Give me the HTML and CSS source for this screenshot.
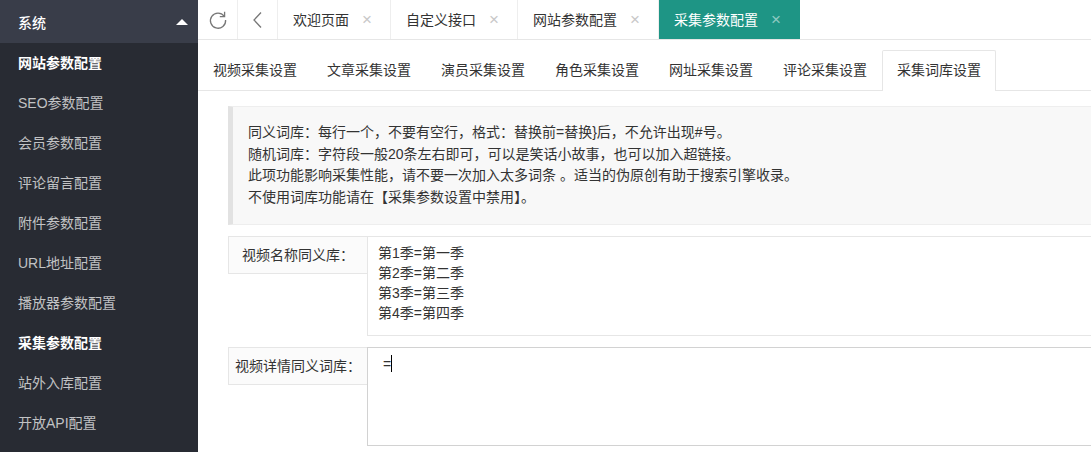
FILE: index.html
```html
<!DOCTYPE html>
<html lang="zh-CN">
<head>
<meta charset="utf-8">
<title>采集参数配置</title>
<link rel="stylesheet" href="styles.css">
</head>
<body>
<div class="app">
  <aside class="side">
    <div class="side-head"><span>系统</span><i class="tri"></i></div>
    <ul class="menu">
      <li class="on">网站参数配置</li>
      <li>SEO参数配置</li>
      <li>会员参数配置</li>
      <li>评论留言配置</li>
      <li>附件参数配置</li>
      <li>URL地址配置</li>
      <li>播放器参数配置</li>
      <li class="on">采集参数配置</li>
      <li>站外入库配置</li>
      <li>开放API配置</li>
    </ul>
  </aside>
  <main class="main">
    <div class="topbar">
      <div class="tool">
        <svg width="20" height="20" viewBox="0 0 20 20"><path d="M16.2 6.2A7.6 7.6 0 1 0 17.6 10" fill="none" stroke="#777" stroke-width="1.3"/><path d="M16.6 1.8V6.6H11.8" fill="none" stroke="#777" stroke-width="1.3"/></svg>
      </div>
      <div class="tool">
        <svg width="12" height="18" viewBox="0 0 12 18"><path d="M9 1.5L2 9l7 7.5" fill="none" stroke="#777" stroke-width="1.3"/></svg>
      </div>
      <div class="ptab">欢迎页面<span class="x">×</span></div>
      <div class="ptab">自定义接口<span class="x">×</span></div>
      <div class="ptab">网站参数配置<span class="x">×</span></div>
      <div class="ptab active">采集参数配置<span class="x">×</span></div>
    </div>
    <div class="subtabs">
      <div class="stab">视频采集设置</div>
      <div class="stab">文章采集设置</div>
      <div class="stab">演员采集设置</div>
      <div class="stab">角色采集设置</div>
      <div class="stab">网址采集设置</div>
      <div class="stab">评论采集设置</div>
      <div class="stab active">采集词库设置</div>
    </div>
    <div class="content">
      <div class="quote">
        <p>同义词库：每行一个，不要有空行，格式：替换前=替换}后，不允许出现#号。</p>
        <p>随机词库：字符段一般20条左右即可，可以是笑话小故事，也可以加入超链接。</p>
        <p>此项功能影响采集性能，请不要一次加入太多词条 。适当的伪原创有助于搜索引擎收录。</p>
        <p>不使用词库功能请在【采集参数设置中禁用】。</p>
      </div>
      <div class="form-item">
        <label class="label">视频名称同义库：</label>
        <div class="textarea">第1季=第一季<br>第2季=第二季<br>第3季=第三季<br>第4季=第四季</div>
      </div>
      <div class="form-item">
        <label class="label">视频详情同义词库：</label>
        <div class="textarea focus"><span class="eq">=</span><span class="caret"></span></div>
      </div>
    </div>
  </main>
</div>
</body>
</html>
```
FILE: styles.css
```css
* { box-sizing: border-box; margin: 0; padding: 0; }
html, body { width: 100%; height: 100%; overflow: hidden; }
body {
  font-family: "Liberation Sans", "Noto Sans CJK SC", sans-serif;
  font-size: 14px;
  color: #333;
  background: #fff;
}
ul { list-style: none; }
.app { display: flex; height: 452px; }

.side { width: 198px; flex: none; background: #282b33; }
.side-head {
  height: 43px;
  background: #393d49;
  color: #fff;
  display: flex;
  align-items: center;
  justify-content: space-between;
  padding: 0 10px 0 18px;
}
.side-head span { font-weight: 500; }
.tri {
  width: 0; height: 0;
  border-left: 6px solid transparent;
  border-right: 6px solid transparent;
  border-bottom: 6px solid #fff;
}
.menu li {
  height: 40px;
  line-height: 40px;
  padding-left: 18px;
  color: rgba(255,255,255,0.72);
}
.menu li.on { color: #fff; font-weight: bold; }

.main { flex: 1; min-width: 0; overflow: hidden; }

.topbar {
  height: 40px;
  display: flex;
  border-bottom: 1px solid #e6e6e6;
}
.tool {
  width: 40px;
  height: 39px;
  border-right: 1px solid #eee;
  display: flex;
  align-items: center;
  justify-content: center;
}
.ptab {
  height: 39px;
  line-height: 39px;
  padding: 0 17px 0 15px;
  border-right: 1px solid #eee;
  color: #333;
  white-space: nowrap;
}
.ptab .x {
  display: inline-block;
  width: 12px;
  margin-left: 12px;
  color: #c8c8c8;
  font-size: 17px;
  text-align: center;
}
.ptab.active { background: #1e9585; color: #fff; border-right-color: #1e9585; }
.ptab.active .x { color: rgba(255,255,255,0.5); }

.subtabs {
  margin-top: 10px;
  height: 41px;
  display: flex;
  border-bottom: 1px solid #e6e6e6;
}
.stab {
  height: 40px;
  line-height: 40px;
  padding: 0 15px;
  white-space: nowrap;
  color: #333;
}
.stab.active {
  padding: 0 14px;
  border: 1px solid #e6e6e6;
  border-bottom: none;
  border-radius: 2px 2px 0 0;
  background: #fff;
  height: 41px;
  line-height: 39px;
}

.content { padding: 15px 0 0 30px; width: 1100px; }
.quote {
  background: #f8f8f8;
  border: 1px solid #eee;
  border-left: 5px solid #e2e2e2;
  padding: 15px 15px 16px;
  line-height: 21.5px;
  color: #333;
}
.form-item { display: flex; margin-top: 11px; }
.label {
  width: 139px;
  height: 38px;
  line-height: 36px;
  flex: none;
  background: #fbfbfb;
  border: 1px solid #e6e6e6;
  border-right: none;
  text-align: center;
  white-space: nowrap;
  color: #333;
}
.textarea {
  flex: 1;
  height: 100px;
  border: 1px solid #e6e6e6;
  padding: 6px 10px;
  line-height: 20px;
  color: #333;
}
.textarea.focus { border-color: #d2d2d2; height: 99px; }
.eq { padding-left: 5px; }
.caret {
  display: inline-block;
  width: 1px;
  height: 17px;
  background: #000;
  vertical-align: -3px;
}
```
